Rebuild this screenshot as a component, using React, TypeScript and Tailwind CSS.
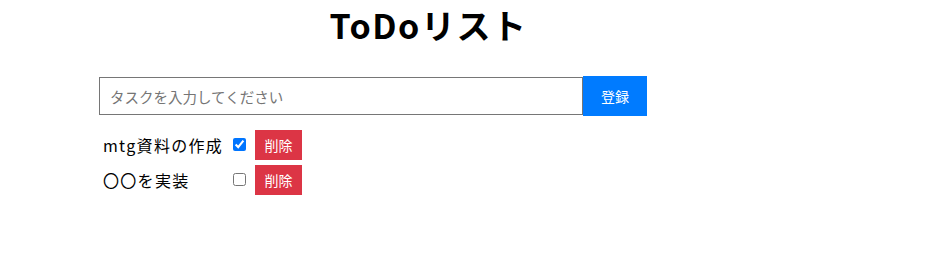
import { useState } from "react";

type Todo = { id: number; title: string; done: boolean };

const initialTodos: Todo[] = [
  { id: 1, title: "mtg資料の作成", done: true },
  { id: 2, title: "〇〇を実装", done: false },
];

export default function App() {
  const [todos, setTodos] = useState<Todo[]>(initialTodos);
  const [text, setText] = useState("");

  const add = () => {
    if (!text.trim()) return;
    setTodos([...todos, { id: Date.now(), title: text, done: false }]);
    setText("");
  };

  return (
    <div
      className="min-h-[265px] bg-white text-black"
      style={{ fontFamily: '"Noto Sans CJK JP", "Noto Sans", sans-serif' }}
    >
      <h1 className="ml-[310px] w-[237px] whitespace-nowrap pt-[2px] text-center text-[34px] font-bold leading-[46px] tracking-[1.5px]">
        ToDoリスト
      </h1>

      <div className="ml-[99px] mt-[28px] flex items-center">
        <input
          value={text}
          onChange={(e) => setText(e.target.value)}
          placeholder="タスクを入力してください"
          className="h-[38px] w-[484px] border border-[#767676] px-[10px] text-[14.5px] outline-none placeholder:text-[#757575]"
        />
        <button
          onClick={add}
          className="h-[40px] w-[64px] bg-[#007bff] text-[14px] text-white"
        >
          登録
        </button>
      </div>

      <ul className="ml-[99px] mt-[14px] flex flex-col gap-[5px]">
        {todos.map((todo) => (
          <li key={todo.id} className="flex h-[30px] items-center">
            <span className="w-[134px] pl-[4px] text-[16px] leading-[30px] tracking-[1.3px]">
              {todo.title}
            </span>
            <input
              type="checkbox"
              checked={todo.done}
              onChange={() =>
                setTodos(
                  todos.map((t) =>
                    t.id === todo.id ? { ...t, done: !t.done } : t
                  )
                )
              }
              className="mb-[2px] h-[13px] w-[13px] accent-[#0075ff]"
            />
            <button
              onClick={() => setTodos(todos.filter((t) => t.id !== todo.id))}
              className="ml-[9px] h-[30px] w-[47px] bg-[#dc3545] text-[14px] text-white"
            >
              削除
            </button>
          </li>
        ))}
      </ul>
    </div>
  );
}
